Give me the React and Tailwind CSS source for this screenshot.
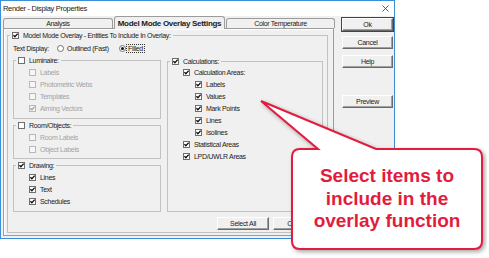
import React from 'react'

const Check = ({ checked, disabled }) => (
  <span className={`w-[7px] h-[7px] shrink-0 border flex items-center justify-center ${disabled ? 'border-[#b8b8b8] bg-[#f6f6f6]' : 'border-[#6e6e6e] bg-white'}`}>
    {checked && (
      <svg width="5" height="5" viewBox="0 0 5 5">
        <path d="M0.4 2.2 L1.9 3.8 L4.7 0.7" fill="none" stroke={disabled ? '#a6a6a6' : '#111'} strokeWidth="1.3" />
      </svg>
    )}
  </span>
)

const Item = ({ label, checked, disabled, indent }) => (
  <div className={`h-[12px] flex items-center gap-[4px] ${indent}`}>
    <Check checked={checked} disabled={disabled} />
    <span className={disabled ? 'text-[#a3a3a3]' : ''}>{label}</span>
  </div>
)

const Group = ({ title, checked, className, children }) => (
  <fieldset className={`border border-[#c2c2c2] ${className}`}>
    <legend className="ml-[2px] px-[2px]">
      <span className="flex items-center gap-[4px] h-[9px]">
        <Check checked={checked} />
        <span>{title}</span>
      </span>
    </legend>
    {children}
  </fieldset>
)

const Radio = ({ on }) => (
  <span className="w-[7px] h-[7px] shrink-0 rounded-full border border-[#727272] bg-white flex items-center justify-center">
    {on && <span className="w-[3px] h-[3px] rounded-full bg-[#111]" />}
  </span>
)

const Button = ({ label, className }) => (
  <div className={`h-[13px] flex items-center justify-center bg-[#f0f0f0] border border-t-white border-l-white border-r-[#6a6a6a] border-b-[#6a6a6a] shadow-[inset_-1px_-1px_0_#a0a0a0] ${className}`}>
    {label}
  </div>
)

const App = () => {
  return (
    <div className="relative w-[489px] h-[258px] bg-white overflow-hidden font-['Liberation_Sans',Arial,sans-serif] text-[7px] tracking-[-0.3px] leading-none text-[#1a1a1a]">
      {/* dialog window */}
      <div className="w-[395px] h-[239px] border border-[#3b8ed8] bg-[#f0f0f0] flex flex-col">
        <div className="h-[15px] bg-white flex items-center justify-between pl-[2px] pr-[5px]">
          <span className="text-[7.5px]">Render - Display Properties</span>
          <svg width="7" height="7" viewBox="0 0 7 7">
            <path d="M0.5 0.5 L6.5 6.5 M6.5 0.5 L0.5 6.5" stroke="#333" strokeWidth="0.8" />
          </svg>
        </div>

        <div className="flex">
          {/* tabs + page */}
          <div className="ml-[2px] flex flex-col">
            <div className="flex items-end h-[12px]">
              <div className="w-[110px] h-[10px] border border-b-0 border-[#9c9c9c] rounded-t-[3px] flex items-center justify-center">
                Analysis
              </div>
              <div className="relative z-10 -mb-px ml-[1px] w-[111px] h-[13px] border border-b-0 border-[#9c9c9c] rounded-t-[3px] bg-[#f0f0f0] flex items-center justify-center pt-[2px] font-bold text-[8px]">
                Model Mode Overlay Settings
              </div>
              <div className="ml-[1px] w-[109px] h-[10px] border border-b-0 border-[#9c9c9c] rounded-t-[3px] flex items-center justify-center">
                Color Temperature
              </div>
            </div>

            <div className="w-[331px] border border-[#9c9c9c] shadow-[inset_1px_1px_0_#fff] pt-[2px] pb-[2px]">
              <Group title="Model Mode Overlay - Entities To Include In Overlay:" checked className="ml-[3px] w-[321px] pb-[2px]">
                <div className="mt-[3px] h-[10px] pl-[5px] flex items-center">
                  <span className="w-[44px]">Text Display:</span>
                  <Radio />
                  <span className="ml-[3px] w-[52px]">Outlined (Fast)</span>
                  <Radio on />
                  <span className="border border-dotted border-[#333] px-[1px] h-[9px] flex items-center">Filled</span>
                </div>

                <div className="mt-[3px] pl-[5px] pr-[4px] flex gap-[6px]">
                  <div className="w-[148px] flex flex-col">
                    <Group title="Luminaire:" className="pt-[1px] pb-[4px]">
                      <Item label="Labels" disabled indent="pl-[15px]" />
                      <Item label="Photometric Webs" disabled indent="pl-[15px]" />
                      <Item label="Templates" disabled indent="pl-[15px]" />
                      <Item label="Aiming Vectors" checked disabled indent="pl-[15px]" />
                    </Group>
                    <Group title="Room/Objects:" className="mt-[2px] pt-[1px] pb-[3px]">
                      <Item label="Room Labels" disabled indent="pl-[15px]" />
                      <Item label="Object Labels" disabled indent="pl-[15px]" />
                    </Group>
                    <Group title="Drawing:" checked className="mt-[2px] pt-[1px] pb-[4px]">
                      <Item label="Lines" checked indent="pl-[15px]" />
                      <Item label="Text" checked indent="pl-[15px]" />
                      <Item label="Schedules" checked indent="pl-[15px]" />
                    </Group>
                  </div>

                  <Group title="Calculations:" checked className="w-[156px] mt-[1px]">
                    <Item label="Calculation Areas:" checked indent="pl-[15px]" />
                    <Item label="Labels" checked indent="pl-[27px]" />
                    <Item label="Values" checked indent="pl-[27px]" />
                    <Item label="Mark Points" checked indent="pl-[27px]" />
                    <Item label="Lines" checked indent="pl-[27px]" />
                    <Item label="Isolines" checked indent="pl-[27px]" />
                    <Item label="Statistical Areas" checked indent="pl-[15px]" />
                    <Item label="LPD/UWLR Areas" checked indent="pl-[15px]" />
                  </Group>
                </div>

                <div className="mt-[5px] pr-[2px] flex justify-end gap-[4px]">
                  <Button label="Select All" className="w-[52px]" />
                  <Button label="Clear All" className="w-[52px]" />
                </div>
              </Group>
            </div>
          </div>

          {/* dialog buttons */}
          <div className="ml-[7px] w-[51px] flex flex-col">
            <Button label="Ok" className="mt-[2px] outline outline-1 outline-[#444]" />
            <Button label="Cancel" className="mt-[5px]" />
            <Button label="Help" className="mt-[6px]" />
            <Button label="Preview" className="mt-[27px]" />
          </div>
        </div>
      </div>

      {/* callout */}
      <svg className="absolute left-[255px] top-[95px]" width="232" height="162" viewBox="0 0 232 162">
        <path
          d="M45 54 L63 54 L6 6 L121 54 L219 54 Q227 54 227 62 L227 146 Q227 154 219 154 L45 154 Q37 154 37 146 L37 62 Q37 54 45 54 Z"
          fill="#fff"
          stroke="#e31c3d"
          strokeWidth="2"
          style={{ filter: 'drop-shadow(2px 2px 2px rgba(0,0,0,0.35))' }}
        />
      </svg>
      <div className="absolute left-[292px] top-[149px] w-[190px] h-[100px] flex items-center justify-center text-center text-[19px] font-bold leading-[22.5px] tracking-normal text-[#e31c3d]">
        Select items to<br />include in the<br />overlay function
      </div>
    </div>
  )
}

export default App
